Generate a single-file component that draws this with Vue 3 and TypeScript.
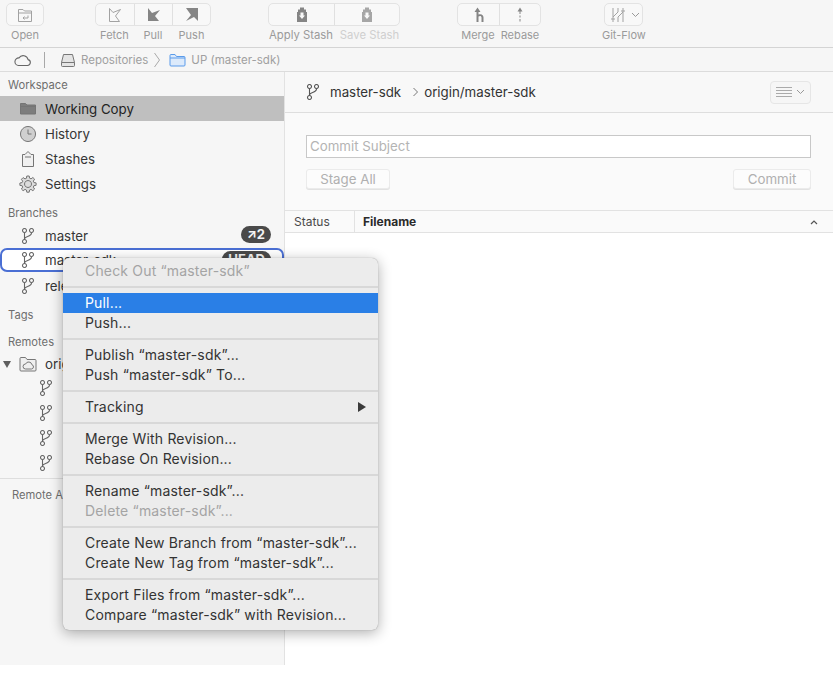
<template>
  <div class="window">
    <header class="toolbar">
      <div
        v-for="group in toolGroups"
        :key="group.id"
        class="tool-group"
        :class="group.id"
      >
        <div class="segments">
          <div
            v-for="tool in group.tools"
            :key="tool.label"
            class="segment"
          >
            <svg width="22" height="20" viewBox="0 0 22 20" class="tool-icon">
              <path
                :d="tool.path"
                :fill="tool.solid ? (tool.faint ? '#a6a6a6' : '#858585') : 'none'"
                :stroke="tool.solid ? 'none' : '#a2a2a2'"
                stroke-width="1"
                fill-rule="evenodd"
              />
            </svg>
            <svg v-if="tool.caret" width="9" height="6" viewBox="0 0 9 6" class="caret">
              <path d="M1 1l3.500 3.500L8 1" fill="none" stroke="#999" stroke-width="1" />
            </svg>
          </div>
        </div>
        <div class="labels">
          <span
            v-for="tool in group.tools"
            :key="tool.label"
            class="tool-label"
            :class="{ faint: tool.faint }"
          >{{ tool.label }}</span>
        </div>
      </div>
    </header>

    <nav class="pathbar">
      <svg width="18" height="14" viewBox="0 0 18 14" class="cloud">
        <path d="M4.500 12.500h9a3 3 0 0 0 .6-5.900A5 5 0 0 0 5 4.900a3.800 3.800 0 0 0-.5 7.600z" fill="none" stroke="#666" stroke-width="1.100" />
      </svg>
      <span class="path-divider" />
      <svg width="16" height="15" viewBox="0 0 16 15" class="disk">
        <path d="M3.500 1.500h9l2 8v3a1 1 0 0 1-1 1h-11a1 1 0 0 1-1-1v-3zM1.500 9.500h13" fill="#e4e4e4" stroke="#777" stroke-width="1" />
      </svg>
      <span class="crumb">Repositories</span>
      <svg width="8" height="16" viewBox="0 0 8 16" class="crumb-sep">
        <path d="M1.500 1l5 7-5 7" fill="none" stroke="#aaa" stroke-width="1" />
      </svg>
      <svg width="17" height="14" viewBox="0 0 17 14" class="folder">
        <path d="M1 12V2.500A1 1 0 0 1 2 1.500h4l1.500 2H15a1 1 0 0 1 1 1V12a1 1 0 0 1-1 1H2a1 1 0 0 1-1-1zM1 5h15" fill="#dceafb" stroke="#5a9bea" stroke-width="1" />
      </svg>
      <span class="crumb">UP (master-sdk)</span>
    </nav>

    <div class="content">
      <aside class="sidebar">
        <h3 class="section first">Workspace</h3>
        <div
          v-for="item in workspaceItems"
          :key="item.label"
          class="row"
          :class="{ selected: item.selected }"
        >
          <svg width="18" height="18" viewBox="0 0 18 18" class="row-icon">
            <path :d="item.path" :fill="item.fill" stroke="#757575" stroke-width="1" />
            <path v-if="item.detail" :d="item.detail" fill="none" stroke="#757575" stroke-width="1" />
          </svg>
          <span>{{ item.label }}</span>
        </div>

        <h3 class="section branches">Branches</h3>
        <div class="row">
          <svg width="18" height="18" viewBox="0 0 18 18" class="row-icon">
            <path :d="branchPath" fill="none" stroke="#666" stroke-width="1.100" />
          </svg>
          <span>master</span>
          <span class="badge">↗2</span>
        </div>
        <div class="row focused">
          <svg width="18" height="18" viewBox="0 0 18 18" class="row-icon">
            <path :d="branchPath" fill="none" stroke="#666" stroke-width="1.100" />
          </svg>
          <span>master-sdk</span>
          <span class="badge">HEAD</span>
        </div>
        <div class="row">
          <svg width="18" height="18" viewBox="0 0 18 18" class="row-icon">
            <path :d="branchPath" fill="none" stroke="#666" stroke-width="1.100" />
          </svg>
          <span>release</span>
        </div>

        <h3 class="section tags">Tags</h3>
        <h3 class="section remotes">Remotes</h3>
        <div class="row remote-root">
          <span class="triangle" />
          <svg width="18" height="17" viewBox="0 0 18 17" class="row-icon">
            <path d="M1 14V2.500A1 1 0 0 1 2 1.500h4.500l1.500 2h8a1 1 0 0 1 1 1V14a1 1 0 0 1-1 1H2a1 1 0 0 1-1-1z" fill="#efefef" stroke="#777" stroke-width="1" />
            <path d="M6.500 13h6a2.200 2.200 0 0 0 .4-4.300A3.300 3.300 0 0 0 6.600 8a2.500 2.500 0 0 0-.1 5z" fill="#efefef" stroke="#777" stroke-width="1" />
          </svg>
          <span>origin</span>
        </div>
        <div
          v-for="name in remoteBranches"
          :key="name"
          class="row remote-branch"
        >
          <svg width="18" height="18" viewBox="0 0 18 18" class="row-icon">
            <path :d="branchPath" fill="none" stroke="#666" stroke-width="1.100" />
          </svg>
          <span>{{ name }}</span>
        </div>
        <div class="sidebar-rule" />
        <h3 class="section assets">Remote Assets</h3>
      </aside>

      <main class="main">
        <div class="branch-bar">
          <svg width="18" height="18" viewBox="0 0 18 18" class="row-icon">
            <path :d="branchPath" fill="none" stroke="#555" stroke-width="1.100" />
          </svg>
          <span>master-sdk</span>
          <svg width="7" height="10" viewBox="0 0 7 10" class="bar-sep">
            <path d="M1.500 1l4 4-4 4" fill="none" stroke="#777" stroke-width="1" />
          </svg>
          <span>origin/master-sdk</span>
          <div class="list-button">
            <svg width="16" height="10" viewBox="0 0 16 10">
              <path d="M0 .5h16M0 3.500h16M0 6.500h16M0 9.500h16" stroke="#aaa" stroke-width="1" />
            </svg>
            <svg width="9" height="6" viewBox="0 0 9 6">
              <path d="M1 1l3.500 3.500L8 1" fill="none" stroke="#999" stroke-width="1" />
            </svg>
          </div>
        </div>

        <section class="commit-area">
          <div class="subject">Commit Subject</div>
          <div class="commit-actions">
            <button class="ghost-button stage" type="button">Stage All</button>
            <button class="ghost-button commit" type="button">Commit</button>
          </div>
        </section>

        <div class="table-head">
          <span class="col-status">Status</span>
          <span class="col-file">Filename</span>
          <svg width="8" height="5" viewBox="0 0 8 5" class="sort">
            <path d="M1 4l3-3 3 3" fill="none" stroke="#555" stroke-width="1.200" />
          </svg>
        </div>
        <div class="table-body" />
      </main>
    </div>

    <div class="context-menu">
      <template v-for="(block, index) in menuBlocks" :key="index">
        <div v-if="index > 0" class="menu-rule" />
        <div
          v-for="item in block"
          :key="item.label"
          class="menu-item"
          :class="{ disabled: item.disabled, active: item.active }"
        >
          <span>{{ item.label }}</span>
          <span v-if="item.submenu" class="submenu-arrow" />
        </div>
      </template>
    </div>
  </div>
</template>

<script setup lang="ts">
interface Tool {
  label: string;
  path: string;
  solid?: boolean;
  faint?: boolean;
  caret?: boolean;
}

interface ToolGroup {
  id: string;
  tools: Tool[];
}

interface MenuItem {
  label: string;
  disabled?: boolean;
  active?: boolean;
  submenu?: boolean;
}

// bag outline with the arrow knocked out by evenodd
const stashPath = 'M7 7V4.500h2V2.500h4v2h2V7h1v10H6V7zM9.500 7.500v3H8l3 3.500 3-3.500h-1.500v-3z';

const toolGroups: ToolGroup[] = [
  {
    id: 'open',
    tools: [
      { label: 'Open', path: 'M4.500 16.500V4.500h4.500l1.500 1.500h7v10.500zM4.500 8h13M14 10.500V13H9M10.500 11.500L9 13l1.500 1.500' },
    ],
  },
  {
    id: 'remote',
    tools: [
      { label: 'Fetch', path: 'M5.500 3.500v13h10l-4-5.500 5-6.500-7.500 3z' },
      { label: 'Pull', path: 'M5 3v13h11l-4-5 5-6-8 3z', solid: true },
      { label: 'Push', path: 'M17 3v13l-4-4-8 4 5-6-5-7z', solid: true },
    ],
  },
  {
    id: 'stash',
    tools: [
      { label: 'Apply Stash', path: stashPath, solid: true },
      { label: 'Save Stash', path: stashPath, solid: true, faint: true },
    ],
  },
  {
    id: 'merge',
    tools: [
      { label: 'Merge', path: 'M8.500 17V7H6.500L9.500 2.500 12.500 7h-2v2.500c3-1 5 .5 5 3V17h-2v-4.500c0-1.500-1.500-2-3-1V17z', solid: true },
      { label: 'Rebase', path: 'M10.500 9V6.500H8.500L11 2.500l2.500 4h-2V9zM10.500 10.500h1v2h-1zM10.500 14h1v2.500h-1z', solid: true },
    ],
  },
  {
    id: 'flow',
    tools: [
      { label: 'Git-Flow', path: 'M6 3v14M6 12L11 7V3M16 3v14M16 7l-5 5v5M4 14h4M14 6h4', caret: true },
    ],
  },
];

const branchPath = 'M5.500 6v7M5.500 12c0-3 7-2 7-6M5.500 1.500a2 2 0 1 0 .01 0zM12.500 1.500a2 2 0 1 0 .01 0zM5.500 12.500a2 2 0 1 0 .01 0z';

const workspaceItems = [
  {
    label: 'Working Copy',
    path: 'M1.500 14V3.500h5l1.500 1.500h8.500v9z',
    detail: 'M1.500 6.500h15',
    fill: '#7d7d7d',
    selected: true,
  },
  {
    label: 'History',
    path: 'M9 1.500a7.500 7.500 0 1 0 .01 0z',
    detail: 'M9 4.500V9h3.500',
    fill: '#cfcfcf',
  },
  {
    label: 'Stashes',
    path: 'M3.500 4.500H6L9 1.500l3 3h2.500v12h-11z',
    detail: 'M6 7h6',
    fill: '#f0f0f0',
  },
  {
    label: 'Settings',
    path: 'M7.800 1h2.400l.4 2.200 1.400.6 1.900-1.300 1.700 1.700-1.300 1.900.6 1.400 2.200.4v2.400l-2.200.4-.6 1.400 1.300 1.900-1.700 1.700-1.900-1.300-1.400.6-.4 2.200H7.800l-.4-2.200-1.400-.6-1.900 1.300-1.700-1.700 1.300-1.900-.6-1.400L.9 10.400V8l2.200-.4.6-1.400-1.300-1.900 1.700-1.700L6 3.900l1.400-.6z',
    detail: 'M9 5.500a3.500 3.500 0 1 0 .01 0z',
    fill: '#dcdcdc',
  },
];

const remoteBranches: string[] = ['master', 'develop', 'dev-sdk', 'release'];

const menuBlocks: MenuItem[][] = [
  [{ label: 'Check Out “master-sdk”', disabled: true }],
  [{ label: 'Pull...', active: true }, { label: 'Push...' }],
  [{ label: 'Publish “master-sdk”...' }, { label: 'Push “master-sdk” To...' }],
  [{ label: 'Tracking', submenu: true }],
  [{ label: 'Merge With Revision...' }, { label: 'Rebase On Revision...' }],
  [{ label: 'Rename “master-sdk”...' }, { label: 'Delete “master-sdk”...', disabled: true }],
  [{ label: 'Create New Branch from “master-sdk”...' }, { label: 'Create New Tag from “master-sdk”...' }],
  [{ label: 'Export Files from “master-sdk”...' }, { label: 'Compare “master-sdk” with Revision...' }],
];
</script>

<style>
html,
body {
  background: #fff;
}
</style>

<style scoped>
.window {
  position: relative;
  display: flex;
  flex-direction: column;
  width: 833px;
  height: 673px;
  overflow: hidden;
  color: #3a3a3a;
  font-family: Inter, "Liberation Sans", Arial, sans-serif;
  background: #fff;
}

.toolbar {
  display: flex;
  flex: none;
  height: 48px;
  padding: 3px 0 0 6px;
  background: #f6f6f6;
  border-bottom: 1px solid #d4d4d4;
  box-sizing: border-box;
}

.tool-group {
  display: flex;
  flex-direction: column;
  align-items: center;
}

.tool-group.remote {
  margin-left: 51px;
}

.tool-group.stash {
  margin-left: 57px;
}

.tool-group.merge {
  margin-left: 57px;
}

.tool-group.flow {
  margin-left: 61px;
}

.segments {
  display: flex;
  height: 23px;
  background: #f8f8f8;
  border: 1px solid #e3e3e3;
  border-radius: 5px;
  box-sizing: border-box;
}

.segment {
  display: flex;
  align-items: center;
  justify-content: center;
  gap: 2px;
  border-left: 1px solid #e0e0e0;
  box-sizing: border-box;
}

.segment:first-child {
  border-left: none;
}

.open .segment {
  width: 36px;
}

.remote .segment {
  width: 38px;
}

.stash .segment {
  width: 65px;
}

.merge .segment {
  width: 41px;
}

.flow .segment {
  width: 37px;
}

.labels {
  display: flex;
  justify-content: center;
  margin-top: 3px;
  white-space: nowrap;
}

.tool-label {
  display: block;
  color: #9a9a9a;
  font-size: 11px;
  line-height: 13px;
  text-align: center;
}

.remote .tool-label {
  width: 38.500px;
}

.stash .tool-label {
  font-size: 11.300px;
}

.stash .tool-label:first-child {
  width: 66px;
}

.stash .tool-label:last-child {
  width: 61px;
  margin-left: 5px;
}

.merge .tool-label {
  width: 42px;
}

.tool-label.faint {
  color: #cfcfcf;
}

.tool-icon {
  display: block;
}

.pathbar {
  display: flex;
  flex: none;
  align-items: center;
  height: 24px;
  padding-top: 1px;
  padding-left: 14px;
  background: #f6f6f6;
  border-bottom: 1px solid #dcdcdc;
  box-sizing: border-box;
}

.path-divider {
  width: 1px;
  height: 16px;
  margin: 0 15px 0 12px;
  background: #a8a8a8;
}

.crumb {
  color: #a0a0a0;
  font-size: 11.500px;
}

.disk {
  margin-right: 5px;
}

.crumb-sep {
  margin: 0 8px 0 5px;
}

.folder {
  margin-right: 5px;
}

.content {
  display: flex;
  flex: none;
  height: 593px;
}

.sidebar {
  position: relative;
  flex: none;
  width: 285px;
  height: 100%;
  background: #f6f6f6;
  border-right: 1px solid #e2e2e2;
  box-sizing: border-box;
}

.section {
  margin: 0;
  padding-left: 8px;
  color: #6e6e6e;
  font-size: 11.200px;
  font-weight: 400;
  line-height: 13px;
}

.section.first {
  padding-top: 7px;
  padding-bottom: 4px;
}

.section.branches {
  padding-top: 11px;
  padding-bottom: 3px;
}

.section.tags {
  padding-top: 11px;
  padding-bottom: 3px;
}

.section.remotes {
  padding-top: 11px;
  padding-bottom: 4px;
}

.section.assets {
  padding-top: 10px;
  padding-left: 12px;
}

.row {
  position: relative;
  display: flex;
  align-items: center;
  gap: 8px;
  height: 25px;
  padding-left: 19px;
  color: #363636;
  font-size: 13.300px;
  box-sizing: border-box;
}

.row.selected {
  color: #242424;
  background: #bfbfbf;
}

.row.focused {
  height: 24px;
  margin-bottom: 1px;
  padding-left: 17px;
  background: #fff;
  border: 2px solid #4a6fd4;
  border-radius: 7px;
}

.row-icon {
  flex: none;
}

.badge {
  position: absolute;
  top: 3px;
  right: 13px;
  padding: 0 6px;
  color: #f4f4f4;
  font-size: 13px;
  font-weight: 700;
  line-height: 17px;
  background: #4a4a4a;
  border-radius: 9px;
}

.row.focused .badge {
  top: 1px;
  right: 11px;
}

.remote-root {
  height: 22px;
}

.triangle {
  position: absolute;
  left: 3px;
  top: 8px;
  width: 0;
  height: 0;
  border-top: 7px solid #5f5f5f;
  border-right: 4px solid transparent;
  border-left: 4px solid transparent;
}

.remote-branch {
  padding-left: 37px;
}

.sidebar-rule {
  height: 1px;
  margin-top: 3px;
  background: #dedede;
}

.main {
  display: flex;
  flex: 1;
  flex-direction: column;
  min-width: 0;
  background: #fff;
}

.branch-bar {
  display: flex;
  flex: none;
  align-items: center;
  gap: 8px;
  height: 41px;
  padding-left: 19px;
  padding-right: 22px;
  color: #333;
  font-size: 13.300px;
  background: #f8f8f8;
  border-bottom: 1px solid #dedede;
  box-sizing: border-box;
}

.bar-sep {
  margin: 0 -3px 0 3px;
}

.list-button {
  display: flex;
  align-items: center;
  gap: 4px;
  margin-left: auto;
  padding: 0 5px;
  height: 21px;
  background: #f6f6f6;
  border: 1px solid #e6e6e6;
  border-radius: 4px;
}

.commit-area {
  flex: none;
  height: 98px;
  padding: 22px 22px 0 21px;
  background: #fafafa;
  border-bottom: 1px solid #e2e2e2;
  box-sizing: border-box;
}

.subject {
  height: 23px;
  padding-left: 3px;
  color: #b4b4b4;
  font-size: 13.300px;
  line-height: 21px;
  background: #fff;
  border: 1px solid #c8c8c8;
  box-sizing: border-box;
}

.commit-actions {
  display: flex;
  justify-content: space-between;
  margin-top: 11px;
}

.ghost-button {
  height: 20px;
  padding: 0;
  color: #b0b0b0;
  font-family: inherit;
  font-size: 13.300px;
  background: #fcfcfc;
  border: 1px solid #ebebeb;
  border-radius: 3px;
  box-shadow: 0 1px 0 #e2e2e2;
}

.ghost-button.stage {
  width: 84px;
}

.ghost-button.commit {
  width: 78px;
}

.table-head {
  position: relative;
  display: flex;
  flex: none;
  align-items: center;
  height: 22px;
  font-size: 12px;
  background: #fafafa;
  border-bottom: 1px solid #e2e2e2;
  box-sizing: border-box;
}

.col-status {
  width: 70px;
  padding-left: 9px;
  color: #4a4a4a;
  line-height: 21px;
  border-right: 1px solid #e2e2e2;
  box-sizing: border-box;
}

.col-file {
  padding-left: 8px;
  color: #2a2a2a;
  font-weight: 700;
}

.sort {
  position: absolute;
  top: 9px;
  right: 15px;
}

.table-body {
  flex: 1;
  background: #fff;
}

.context-menu {
  position: absolute;
  top: 258px;
  left: 63px;
  width: 315px;
  height: 372px;
  padding-top: 3px;
  background: #ececec;
  border-radius: 6px;
  box-shadow: 0 3px 14px rgb(0 0 0 / 32%), 0 0 1px rgb(0 0 0 / 40%);
  box-sizing: border-box;
}

.menu-item {
  display: flex;
  align-items: center;
  justify-content: space-between;
  height: 20px;
  padding: 0 12px 1px 22px;
  color: #333;
  font-size: 14px;
  letter-spacing: 0.170px;
  white-space: nowrap;
  box-sizing: border-box;
}

.menu-item.disabled {
  color: #a4a4a4;
}

.menu-item.active {
  color: #fff;
  background: #2a7fe6;
}

.submenu-arrow {
  width: 0;
  height: 0;
  border-top: 5px solid transparent;
  border-bottom: 5px solid transparent;
  border-left: 8px solid #3a3a3a;
}

.menu-rule {
  height: 2px;
  margin: 5px 0;
  background: #d8d8d8;
}
</style>
